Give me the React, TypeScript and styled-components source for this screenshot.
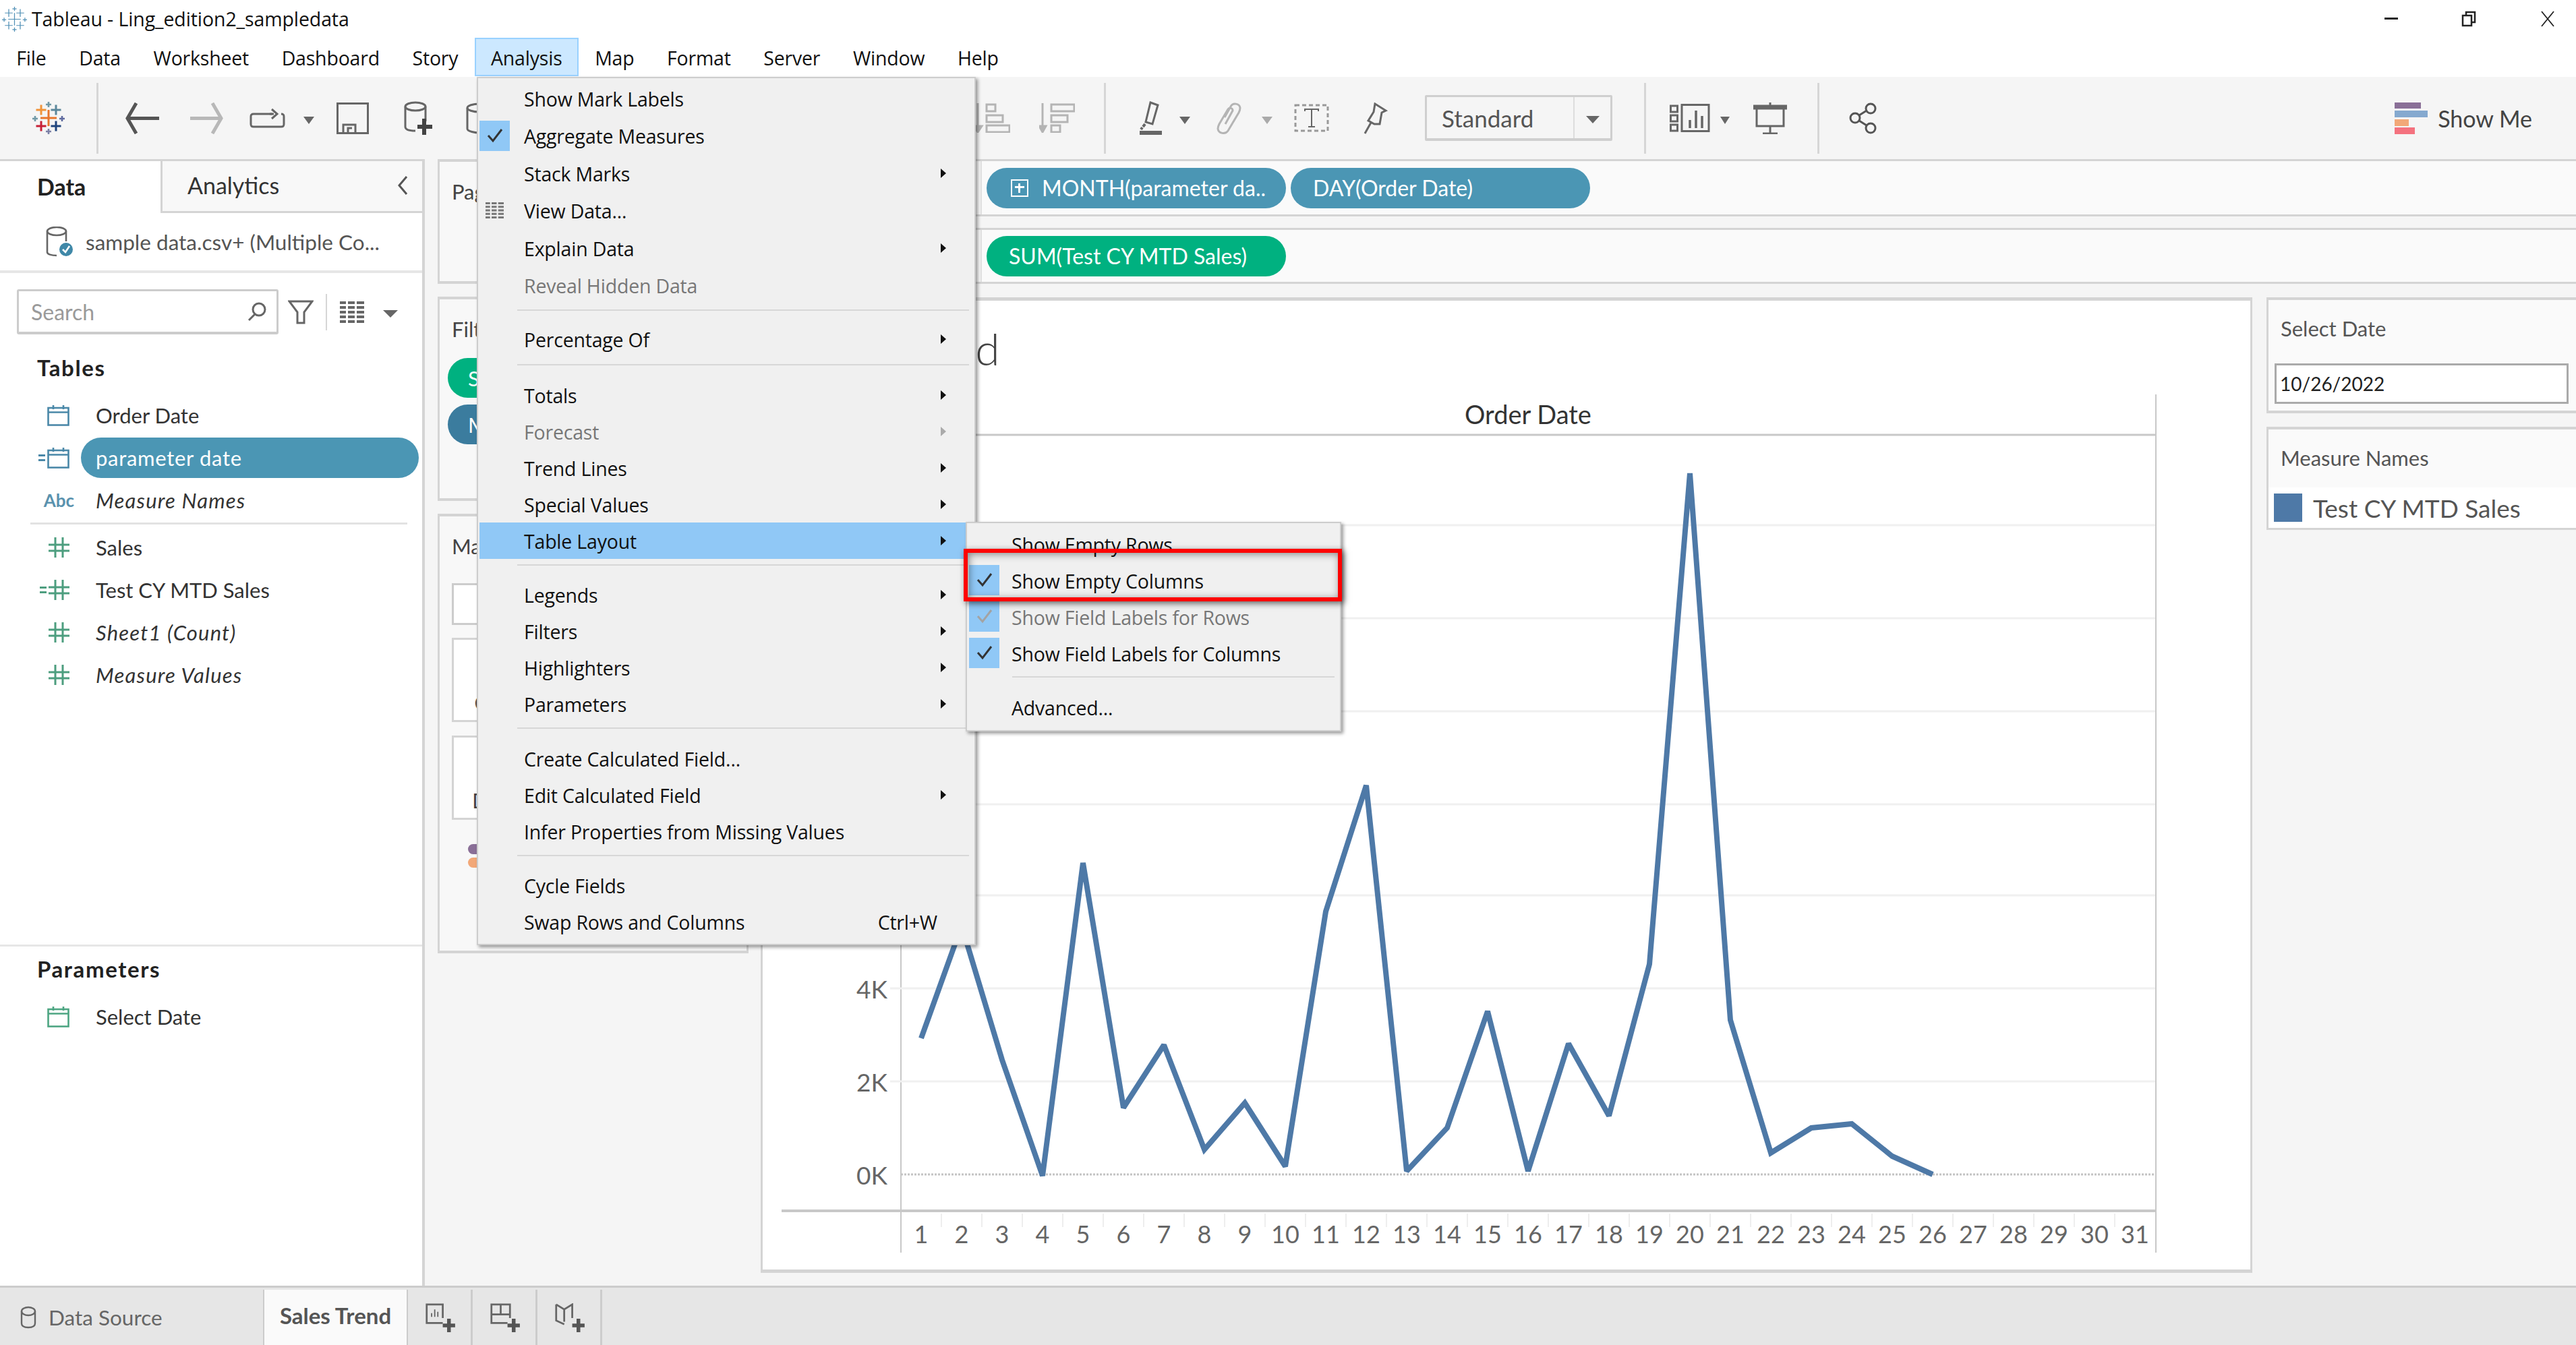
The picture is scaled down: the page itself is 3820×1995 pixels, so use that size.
import React from "react";
import styled, { createGlobalStyle } from "styled-components";

const BOOK = `"Lato", "Open Sans", sans-serif`;
const UI = `"Open Sans", "Noto Sans", sans-serif`;
const BORDER = "#d4d4d4";

const GlobalStyle = createGlobalStyle`
  html, body { margin: 0; padding: 0; background: #fff; }
  * { box-sizing: border-box; }
`;

const Page = styled.div`
  position: relative;
  width: 3820px;
  height: 1995px;
  overflow: hidden;
  display: flex;
  flex-direction: column;
  background: #f5f5f5;
  font-family: ${BOOK};
`;

const TitleBar = styled.div`
  height: 56px;
  background: #fff;
  display: flex;
  align-items: center;
  position: relative;
`;

const TitleText = styled.span`
  margin-left: 7px;
  font: 400 28.5px ${UI};
  letter-spacing: -0.1px;
  color: #111;
`;

const WindowButtons = styled.div`
  margin-left: auto;
  display: flex;
  align-items: center;
  height: 100%;
  padding-right: 30px;
  gap: 94px;
`;

const MenuBar = styled.div`
  height: 58px;
  background: #fff;
  display: flex;
`;

const MenuBarItem = styled.div<{ $open?: boolean }>`
  height: 57px;
  padding: 2px 22.3px 0;
  display: flex;
  align-items: center;
  font: 400 28.5px ${UI};
  letter-spacing: -0.2px;
  color: #111;
  background: ${(p) => (p.$open ? "#cce8ff" : "transparent")};
  border: 2px solid ${(p) => (p.$open ? "#99d1ff" : "transparent")};
`;

const Toolbar = styled.div`
  height: 122px;
  display: flex;
  align-items: center;
  padding: 0 65px 0 48px;
  background: #f5f5f5;
`;

const Tool = styled.div<{ $ml?: number }>`
  margin-left: ${(p) => p.$ml ?? 0}px;
  display: flex;
  align-items: center;
  flex: none;
`;

const ToolSep = styled.div<{ $ml: number }>`
  margin-left: ${(p) => p.$ml}px;
  width: 3px;
  height: 105px;
  background: #d6d6d6;
  flex: none;
`;

const Tri = styled.div<{ $ml: number; $light?: boolean; $w?: number }>`
  margin-left: ${(p) => p.$ml}px;
  flex: none;
  width: 0;
  height: 0;
  margin-top: 6px;
  border-left: ${(p) => (p.$w ?? 16) / 2}px solid transparent;
  border-right: ${(p) => (p.$w ?? 16) / 2}px solid transparent;
  border-top: 11px solid ${(p) => (p.$light ? "#aaa" : "#666")};
`;

const SelectBox = styled.div<{ $ml: number }>`
  margin-left: ${(p) => p.$ml}px;
  width: 278px;
  height: 68px;
  flex: none;
  border: 3px solid #cfcfcf;
  border-bottom-width: 4px;
  border-radius: 2px;
  display: flex;
  align-items: center;
  font: 400 35px ${BOOK};
  color: #555;
  padding-left: 22px;
`;

const SelectArrow = styled.div`
  margin-left: auto;
  width: 55px;
  height: 100%;
  border-left: 2px solid #ddd;
  display: flex;
  align-items: center;
  justify-content: center;
`;

const ShowMe = styled.div`
  margin-left: auto;
  display: flex;
  align-items: center;
  gap: 15px;
  font: 400 34px ${BOOK};
  color: #444;
`;

const Body = styled.div`
  flex: 1;
  display: flex;
  min-height: 0;
`;

/* left pane */

const DataPane = styled.div`
  width: 630px;
  background: #fff;
  border-top: 3px solid ${BORDER};
  border-right: 4px solid ${BORDER};
  display: flex;
  flex-direction: column;
  flex: none;
`;

const PaneTabs = styled.div`
  height: 77px;
  display: flex;
`;

const DataTab = styled.div`
  width: 238px;
  display: flex;
  align-items: center;
  padding: 0 0 3px 55px;
  font: 700 34px ${BOOK};
  color: #222;
`;

const AnalyticsTab = styled.div`
  flex: 1;
  display: flex;
  align-items: center;
  padding: 0 21px 3px 37px;
  justify-content: space-between;
  background: #f8f8f8;
  border-left: 3px solid ${BORDER};
  border-bottom: 3px solid ${BORDER};
  font: 400 34px ${BOOK};
  color: #333;
`;

const SourceRow = styled.div`
  height: 89px;
  display: flex;
  align-items: center;
  padding-left: 68px;
  gap: 19px;
  border-bottom: 4px solid #e6e6e6;
  font: 400 31.5px ${BOOK};
  color: #555;
`;

const SearchRow = styled.div`
  display: flex;
  align-items: center;
  padding: 24px 0 0 25px;
`;

const SearchBox = styled.div`
  width: 388px;
  height: 67px;
  border: 3px solid #ccc;
  border-bottom-width: 4px;
  border-radius: 3px;
  display: flex;
  align-items: center;
  justify-content: space-between;
  padding: 0 14px 0 18px;
  font: 400 32px ${BOOK};
  color: #9a9a9a;
`;

const SearchSep = styled.div`
  margin-left: 18px;
  width: 2px;
  height: 54px;
  background: #d6d6d6;
  flex: none;
`;

const Heading = styled.div<{ $mt: number }>`
  margin: ${(p) => p.$mt}px 0 0 55px;
  height: 40px;
  display: flex;
  align-items: center;
  font: 700 33px ${BOOK};
  letter-spacing: 1.6px;
  color: #222;
`;

const FieldList = styled.div`
  margin-top: 19px;
`;

const FieldRow = styled.div`
  height: 63px;
  display: flex;
  align-items: center;
`;

const FieldIcon = styled.div`
  width: 120px;
  flex: none;
  display: flex;
  justify-content: flex-end;
  align-items: center;
  padding-right: 17px;
`;

const AbcIcon = styled.span`
  font: 700 26px ${BOOK};
  color: #5a92ae;
  margin-right: -7px;
`;

const FieldName = styled.div<{ $italic?: boolean; $active?: boolean }>`
  height: 60px;
  flex: 1;
  margin-right: 5px;
  display: flex;
  align-items: center;
  padding-left: 22px;
  border-radius: 30px;
  font: ${(p) => (p.$italic ? "italic" : "normal")} 400 31px ${BOOK};
  letter-spacing: ${(p) => (p.$italic ? "1.2px" : p.$active ? "0.7px" : "0")};
  color: ${(p) => (p.$active ? "#fff" : "#333")};
  background: ${(p) => (p.$active ? "#4b96b4" : "transparent")};
`;

const FieldDivider = styled.div`
  height: 3px;
  background: #e2e2e2;
  margin: 2px 22px 2px 45px;
`;

const ParamSection = styled.div`
  margin-top: auto;
  height: 506px;
  border-top: 3px solid #e6e6e6;
`;

/* cards column */

const CardsPane = styled.div`
  width: 498px;
  flex: none;
  padding-left: 19px;
  display: flex;
  flex-direction: column;
  gap: 19px;
`;

const Card = styled.div<{ $h: number }>`
  width: 461px;
  height: ${(p) => p.$h}px;
  flex: none;
  background: #f8f8f8;
  border: 3px solid ${BORDER};
  border-width: 4px 3px;
  padding: 25px 20px 0 18px;
  font: 400 31px ${BOOK};
  color: #444;
`;

const FilterSpace = styled.div`
  height: 24px;
`;

const FilterPill = styled.div<{ $c: string }>`
  height: 59px;
  margin: 0 0 10px -6px;
  border-radius: 30px;
  background: ${(p) => p.$c};
  color: #fff;
  display: flex;
  align-items: center;
  padding-left: 30px;
`;

const MarkSelect = styled.div`
  height: 62px;
  margin-top: 36px;
  background: #fff;
  border: 3px solid #ccc;
`;

const MarkTiles = styled.div`
  display: grid;
  grid-template-columns: repeat(3, 1fr);
  grid-auto-rows: 125px;
  gap: 20px 0;
  margin-top: 19px;
`;

const MarkTile = styled.div`
  border: 3px solid ${BORDER};
  background: #fff;
  display: flex;
  align-items: flex-end;
  justify-content: center;
  padding-bottom: 8px;
  font-size: 30px;
`;

const MarkDot = styled.div<{ $c: string; $mt: number }>`
  width: 34px;
  height: 15px;
  border-radius: 8px;
  margin: ${(p) => p.$mt}px 0 0 24px;
  background: ${(p) => p.$c};
`;

/* main */

const Main = styled.div`
  flex: 1;
  min-width: 0;
  display: flex;
  flex-direction: column;
`;

const Shelf = styled.div<{ $h: number; $mb: number }>`
  height: ${(p) => p.$h}px;
  margin-bottom: ${(p) => p.$mb}px;
  flex: none;
  background: #fafafa;
  border-top: 3px solid ${BORDER};
  border-bottom: 3px solid ${BORDER};
  display: flex;
  align-items: center;
`;

const ShelfLabel = styled.div`
  width: 328px;
  height: 100%;
  flex: none;
  border-right: 2px solid #e2e2e2;
`;

const Pill = styled.div<{ $c: string }>`
  width: 444px;
  height: 60px;
  margin-left: 7px;
  flex: none;
  border-radius: 30px;
  background: ${(p) => p.$c};
  color: #fff;
  font: 400 32px ${BOOK};
  display: flex;
  align-items: center;
  gap: 20px;
  padding-left: 33px;
  white-space: nowrap;
`;

const PlusBox = styled.span`
  width: 26px;
  height: 26px;
  border: 2.5px solid #fff;
  position: relative;
  margin-left: 3px;
  flex: none;
  &::before, &::after {
    content: "";
    position: absolute;
    background: #fff;
  }
  &::before { left: 4px; right: 4px; top: 8.5px; height: 3px; }
  &::after { top: 4px; bottom: 4px; left: 8.5px; width: 3px; }
`;

const Content = styled.div`
  flex: 1;
  display: flex;
  gap: 21px;
  padding-bottom: 19px;
  min-height: 0;
`;

const ChartCard = styled.div`
  width: 2212px;
  flex: none;
  background: #fff;
  border: 3px solid ${BORDER};
  border-width: 5px 3px;
  display: flex;
  flex-direction: column;
`;

const ChartTitle = styled.div`
  height: 124px;
  padding: 31px 0 0 33px;
  font: 300 66px ${BOOK};
  color: #444;
`;

const Side = styled.div`
  flex: 1;
  display: flex;
  flex-direction: column;
  gap: 20px;
`;

const SideCard = styled.div<{ $h: number }>`
  height: ${(p) => p.$h}px;
  background: #fafafa;
  border-top: 4px solid ${BORDER};
  border-bottom: 4px solid ${BORDER};
  border-left: 3px solid ${BORDER};
`;

const SideTitle = styled.div`
  height: 84px;
  padding-left: 18px;
  display: flex;
  align-items: center;
  font: 400 31px ${BOOK};
  color: #555;
`;

const DateInput = styled.div`
  width: 436px;
  height: 60px;
  margin: 10px 0 0 9px;
  background: #fff;
  border: 3px solid #aaa;
  display: flex;
  align-items: center;
  padding-left: 5px;
  font: 400 28px ${BOOK};
  color: #222;
`;

const LegendRow = styled.div`
  height: 60px;
  margin-top: 2px;
  background: #fff;
  display: flex;
  align-items: center;
  padding-left: 8px;
  gap: 16px;
  font: 400 37px ${BOOK};
  color: #555;
`;

const Swatch = styled.div`
  width: 42px;
  height: 42px;
  background: #4e79a7;
`;

/* bottom tabs */

const BottomBar = styled.div`
  height: 88px;
  flex: none;
  background: #e6e6e6;
  border-top: 3px solid #ccc;
  display: flex;
  padding-top: 3px;
`;

const SourceTab = styled.div`
  width: 392px;
  display: flex;
  align-items: center;
  gap: 18px;
  padding-left: 30px;
  border-right: 2px solid #ccc;
  font: 400 31.5px ${BOOK};
  color: #666;
`;

const SheetTab = styled.div`
  width: 213px;
  background: #fafafa;
  border-right: 2px solid #ccc;
  display: flex;
  justify-content: center;
  padding-top: 18px;
  font: 700 33px ${BOOK};
  color: #555;
`;

const NewTab = styled.div`
  width: 96px;
  border-right: 3px solid #ccc;
  display: flex;
  align-items: center;
  justify-content: center;
  padding-top: 2px;
`;

/* menus */

const Menu = styled.div<{ $left: number; $top: number; $w: number }>`
  position: absolute;
  left: ${(p) => p.$left}px;
  top: ${(p) => p.$top}px;
  width: ${(p) => p.$w}px;
  background: #f0f0f0;
  border: 2px solid #cdcdcd;
  box-shadow: 3px 3px 5px rgba(0, 0, 0, 0.4);
  font: 400 28.5px ${UI};
  letter-spacing: -0.2px;
  color: #111;
`;

const MainMenu = styled(Menu)`
  padding: 2px 8px 7px 2px;
  height: 1288px;
`;

const SubMenu = styled(Menu)`
  padding: 3px 8px 5px 3px;
  height: 311px;
`;

const MenuRow = styled.div<{ $h?: number; $hot?: boolean; $off?: boolean }>`
  height: ${(p) => p.$h ?? 54}px;
  margin-right: 5px;
  display: flex;
  align-items: center;
  padding-right: 29px;
  background: ${(p) => (p.$hot ? "#90c8f6" : "transparent")};
  color: ${(p) => (p.$off ? "#777" : "#111")};
`;

const CheckSlot = styled.div<{ $on?: boolean; $gap: number }>`
  width: 45px;
  height: 45px;
  margin-right: ${(p) => p.$gap}px;
  flex: none;
  display: flex;
  align-items: center;
  justify-content: center;
  background: ${(p) => (p.$on ? "#90c8f6" : "transparent")};
`;

const MenuLabel = styled.span`
  flex: 1;
  white-space: nowrap;
  padding-top: 2px;
`;

const SubLabel = styled(MenuLabel)`
  padding-top: 4px;
`;

const Shortcut = styled.span`
  margin-right: 13px;
  padding-top: 2px;
`;

const SubArrow = styled.span<{ $off?: boolean }>`
  width: 0;
  height: 0;
  border-top: 7px solid transparent;
  border-bottom: 7px solid transparent;
  border-left: 8px solid ${(p) => (p.$off ? "#aaa" : "#111")};
`;

const MenuSep = styled.div<{ $ml: number; $top?: number; $bottom?: number }>`
  height: 2px;
  margin: ${(p) => p.$top ?? 8}px 0 ${(p) => p.$bottom ?? 16}px ${(p) => p.$ml}px;
  background: #d7d7d7;
`;

const Callout = styled.div`
  position: absolute;
  left: 1429px;
  top: 814px;
  width: 561px;
  height: 78px;
  border: 6px solid #ff0000;
  box-shadow: 3px 3px 9px rgba(0, 0, 0, 0.6), inset 2px 2px 12px rgba(0, 0, 0, 0.45);
`;

/* drawings */

const G = "#666";

const TableauLogo: React.FC<{ size: number; mono?: boolean }> = ({ size, mono }) => {
  const crosses: [number, number, number, string][] = [
    [24, 24, 12, "#e8762d"],
    [13, 12, 7.5, "#f0943b"],
    [35, 12, 7.5, "#5b879b"],
    [13, 36, 7.5, "#c72037"],
    [35, 36, 7.5, "#1f457e"],
    [24, 4, 4, "#7099a6"],
    [24, 44, 4, "#7b80a6"],
    [4, 25, 4, "#7099a6"],
    [44, 25, 4, "#5f6a9f"],
  ];
  return (
    <svg width={size} height={size} viewBox="0 0 48 48">
      {crosses.map(([x, y, r, c], i) => (
        <path
          key={i}
          d={`M${x - r} ${y}H${x + r}M${x} ${y - r}V${y + r}`}
          stroke={mono ? "#4f8fb5" : c}
          strokeWidth={mono ? 1.6 : r > 5 ? 3 : 2.6}
          fill="none"
        />
      ))}
    </svg>
  );
};

const Cylinder: React.FC<{ w: number; h: number; c?: string; sw?: number }> = ({ w, h, c = G, sw = 3 }) => (
  <svg width={w} height={h} viewBox={`0 0 ${w} ${h}`} fill="none" stroke={c} strokeWidth={sw}>
    <ellipse cx={w / 2} cy={8} rx={w / 2 - 2} ry={6} />
    <path d={`M2 8V${h - 8}C2 ${h - 4} ${w / 2 - 6} ${h - 2} ${w / 2} ${h - 2}C${w / 2 + 6} ${h - 2} ${w - 2} ${h - 4} ${w - 2} ${h - 8}V8`} />
  </svg>
);

const Calendar: React.FC<{ c: string }> = ({ c }) => (
  <svg width="33" height="32" viewBox="0 0 33 32" fill="none" stroke={c} strokeWidth="2.6">
    <rect x="1.5" y="5" width="30" height="25.5" />
    <path d="M1.5 11.5H31.5M9 1V7M24 1V7" />
  </svg>
);

const Hash: React.FC<{ c?: string }> = ({ c = "#4d9e7f" }) => (
  <svg width="31" height="30" viewBox="0 0 31 30" fill="none" stroke={c} strokeWidth="3">
    <path d="M0 11H31M0 20H31M10 0V30M21 0V30" />
  </svg>
);

const EqMark = styled.svg`
  margin-right: 3px;
`;

const Eq: React.FC<{ c: string }> = ({ c }) => (
  <EqMark width="10" height="12" viewBox="0 0 10 12" fill={c}>
    <rect y="1" width="10" height="3" />
    <rect y="8" width="10" height="3" />
  </EqMark>
);

const ListIcon: React.FC<{ w?: number; h?: number; c?: string }> = ({ w = 36, h = 32, c = "#666" }) => (
  <svg width={w} height={h} viewBox="0 0 36 32" fill={c}>
    {[0, 7, 14, 21, 28].map((y) => (
      <g key={y}>
        <rect x="0" y={y} width="9" height="4" />
        <rect x="12" y={y} width="10" height="4" />
        <rect x="25" y={y} width="11" height="4" />
      </g>
    ))}
  </svg>
);

const CheckMark: React.FC<{ off?: boolean }> = ({ off }) => (
  <svg width="24" height="22" viewBox="0 0 24 22" fill="none" stroke={off ? "#a3a3a3" : "#333"} strokeWidth="3">
    <path d="M2 11L9 19L22 2" />
  </svg>
);

const AddBadge = () => <path d="M40 25V47M30 36H50" stroke="#555" strokeWidth="6" />;

const NewWorksheet = () => (
  <svg width="46" height="44" viewBox="0 0 50 48" fill="none" stroke="#666" strokeWidth="3">
    <path d="M30 32H4V2H30V24" />
    <path d="M12 22V16M17 22V10M22 22V14" strokeWidth="2" />
    <AddBadge />
  </svg>
);

const NewDashboard = () => (
  <svg width="46" height="44" viewBox="0 0 50 48" fill="none" stroke="#666" strokeWidth="3">
    <path d="M30 32H4V2H34V24M19 2V18M4 18H34" />
    <AddBadge />
  </svg>
);

const NewStory = () => (
  <svg width="46" height="44" viewBox="0 0 50 48" fill="none" stroke="#666" strokeWidth="3">
    <path d="M4 2L17 10L30 2V24M4 2V28L17 34M17 10V30" />
    <AddBadge />
  </svg>
);

const days = [1540, 1373, 1572, 1744, 1280, 1643, 1550, 1705, 1636, 1730, 1352, 1165, 1737, 1673, 1500, 1737, 1548, 1655, 1430, 702, 1513, 1710, 1673, 1667, 1715, 1742];

const ChartSvg = styled.svg`
  display: block;
`;

const LineChart = () => {
  const xOf = (d: number) => 1366 + (d - 1) * 60;
  const points = days.map((y, i) => `${xOf(i + 1)},${y}`).join(" ");
  const grid = [779, 917, 1055, 1193, 1328, 1466, 1604];
  return (
    <ChartSvg width="2206" height="1308" viewBox="1131 570 2206 1308">
      <path d="M1159 645H3198" stroke="#c8c8c8" strokeWidth="3" />
      <path d="M1336 645V1858M3197 585V1858" stroke="#c8c8c8" strokeWidth="2" />
      {grid.map((y) => (
        <path key={y} d={`M1320 ${y}H3196`} stroke="#f0f0f0" strokeWidth="3" />
      ))}
      <path d="M1336 1742H3196" stroke="#c4c4c4" strokeWidth="3" strokeDasharray="3 2" />
      <path d="M1159 1796H3198" stroke="#c8c8c8" strokeWidth="4" />
      {Array.from({ length: 30 }, (_, i) => (
        <path key={i} d={`M${1396 + i * 60} 1800V1820`} stroke="#eee" strokeWidth="2" />
      ))}
      <text x="2266" y="629" textAnchor="middle" fontFamily={BOOK} fontSize="38" fill="#333">
        Order Date
      </text>
      {[
        ["4K", 1481],
        ["2K", 1619],
        ["0K", 1757],
      ].map(([t, y]) => (
        <text key={t} x="1316" y={y} textAnchor="end" fontFamily={BOOK} fontSize="37" fill="#666">
          {t}
        </text>
      ))}
      {Array.from({ length: 31 }, (_, i) => (
        <text key={i} x={xOf(i + 1)} y="1844" textAnchor="middle" fontFamily={BOOK} fontSize="36" fill="#666">
          {i + 1}
        </text>
      ))}
      <polyline points={points} fill="none" stroke="#4e79a7" strokeWidth="8" strokeLinejoin="miter" strokeMiterlimit="2" />
    </ChartSvg>
  );
};

type Entry = { label: string; arrow?: boolean; off?: boolean; hot?: boolean; check?: boolean; grid?: boolean; key?: string };

const MRow: React.FC<{ e: Entry; h?: number }> = ({ e, h }) => (
  <MenuRow $h={h} $hot={e.hot} $off={e.off}>
    <CheckSlot $on={e.check} $gap={21}>
      {e.check && <CheckMark />}
      {e.grid && <ListIcon w={31} h={24} c="#777" />}
    </CheckSlot>
    <MenuLabel>{e.label}</MenuLabel>
    {e.key && <Shortcut>{e.key}</Shortcut>}
    {e.arrow && <SubArrow $off={e.off} />}
  </MenuRow>
);

const App: React.FC = () => (
  <Page>
    <GlobalStyle />
    <TitleBar>
      <Tool $ml={3}>
        <TableauLogo size={37} mono />
      </Tool>
      <TitleText>Tableau - Ling_edition2_sampledata</TitleText>
      <WindowButtons>
        <svg width="20" height="4" viewBox="0 0 20 4">
          <rect width="20" height="3" fill="#222" />
        </svg>
        <svg width="22" height="24" viewBox="0 0 22 24" fill="none" stroke="#222" strokeWidth="2.5">
          <rect x="2" y="7" width="13" height="15" />
          <path d="M7 7V2H20V17H15" />
        </svg>
        <svg width="24" height="24" viewBox="0 0 24 24" fill="none" stroke="#222" strokeWidth="1.8">
          <path d="M3 1L21 23M21 1L3 23" />
        </svg>
      </WindowButtons>
    </TitleBar>
    <MenuBar>
      {["File", "Data", "Worksheet", "Dashboard", "Story", "Analysis", "Map", "Format", "Server", "Window", "Help"].map((m) => (
        <MenuBarItem key={m} $open={m === "Analysis"}>
          {m}
        </MenuBarItem>
      ))}
    </MenuBar>
    <Toolbar>
      <Tool>
        <TableauLogo size={48} />
      </Tool>
      <ToolSep $ml={47} />
      <Tool $ml={39}>
        <svg width="51" height="47" viewBox="0 0 51 47" fill="none" stroke="#555" strokeWidth="5">
          <path d="M51 23.5H4M17 1L4 23.5L17 46" />
        </svg>
      </Tool>
      <Tool $ml={46}>
        <svg width="50" height="47" viewBox="0 0 50 47" fill="none" stroke="#b8b8b8" strokeWidth="5">
          <path d="M0 23.5H46M33 1L46 23.5L33 46" />
        </svg>
      </Tool>
      <Tool $ml={38}>
        <svg width="53" height="30" viewBox="0 0 53 30" fill="none" stroke="#666" strokeWidth="3">
          <path d="M34 9H6C3 9 2 10 2 13V24C2 27 3 28 6 28H47C50 28 51 27 51 24V13C51 10 50 9 47 9" />
          <path d="M30 9H36M33 2L41 9L33 16" />
        </svg>
      </Tool>
      <Tri $ml={27} />
      <Tool $ml={33}>
        <svg width="48" height="47" viewBox="0 0 48 47" fill="none" stroke="#666" strokeWidth="3">
          <rect x="1.5" y="1.5" width="45" height="44" />
          <path d="M10 45V33H28V45M17 45V38H23" />
        </svg>
      </Tool>
      <Tool $ml={52}>
        <svg width="42" height="50" viewBox="0 0 42 50" fill="none" stroke="#666" strokeWidth="3">
          <ellipse cx="17" cy="8" rx="15" ry="6" />
          <path d="M2 8V38C2 42 8 44 17 44M32 8V30" />
          <path d="M30 26V50M20 38H42" stroke="#444" strokeWidth="6" />
        </svg>
      </Tool>
      <Tool $ml={50}>
        <Cylinder w={40} h={47} />
      </Tool>
      <Tool $ml={710}>
        <svg width="57" height="44" viewBox="0 0 57 44" fill="none" stroke="#b4b4b4" strokeWidth="3">
          <path d="M9 0V34" />
          <path d="M3 34H15L9 43Z" fill="#b4b4b4" />
          <rect x="22" y="2" width="13" height="10" />
          <rect x="22" y="18" width="24" height="10" />
          <rect x="22" y="33" width="34" height="10" />
        </svg>
      </Tool>
      <Tool $ml={43}>
        <svg width="53" height="44" viewBox="0 0 53 44" fill="none" stroke="#b4b4b4" strokeWidth="3">
          <path d="M5 0V34" />
          <path d="M0 34H10L5 43Z" fill="#b4b4b4" />
          <rect x="18" y="2" width="34" height="10" />
          <rect x="18" y="18" width="24" height="10" />
          <rect x="18" y="33" width="13" height="10" />
        </svg>
      </Tool>
      <ToolSep $ml={43} />
      <Tool $ml={50}>
        <svg width="33" height="50" viewBox="0 0 33 50" fill="none" stroke="#666" strokeWidth="3">
          <path d="M16 2L27 6L19 34L9 31Z" />
          <path d="M8 34L5 38M4 39L2 42" strokeWidth="4" />
          <rect x="0" y="44" width="33" height="6" fill="#666" stroke="none" />
        </svg>
      </Tool>
      <Tri $ml={26} />
      <Tool $ml={39}>
        <svg width="37" height="50" viewBox="0 0 37 50" fill="none" stroke="#b4b4b4" strokeWidth="3">
          <path d="M12 24L21 8C24 2 34 3 35 10C35 13 34 15 33 17L17 44C13 50 3 48 2 41C2 38 3 36 4 34L17 12C19 9 24 10 24 14L13 34" />
        </svg>
      </Tool>
      <Tri $ml={30} $light />
      <Tool $ml={32}>
        <svg width="52" height="42" viewBox="0 0 52 42" fill="none" stroke="#999" strokeWidth="3">
          <rect x="2" y="2" width="48" height="38" strokeDasharray="6 4" />
          <path d="M16 11V8H36V11M26 8V34M21 34H31" stroke="#666" strokeWidth="2" />
        </svg>
      </Tool>
      <Tool $ml={50}>
        <svg width="38" height="47" viewBox="0 0 38 47" fill="none" stroke="#666" strokeWidth="3">
          <path d="M18 2L34 12L28 15L25 32L17 32L8 27L16 14Z" />
          <path d="M12 30L3 46" />
        </svg>
      </Tool>
      <SelectBox $ml={54}>
        Standard
        <SelectArrow>
          <Tri $ml={0} $w={20} />
        </SelectArrow>
      </SelectBox>
      <ToolSep $ml={47} />
      <Tool $ml={35}>
        <svg width="60" height="42" viewBox="0 0 60 42" fill="none" stroke="#666" strokeWidth="3">
          <rect x="18" y="1.5" width="40" height="39" />
          <path d="M30 36V24M39 36V10M48 36V18" strokeWidth="3.5" />
          <rect x="1.5" y="3" width="10" height="9" />
          <rect x="1.5" y="17" width="10" height="9" />
          <rect x="1.5" y="31" width="10" height="9" />
        </svg>
      </Tool>
      <Tri $ml={15} $w={14} />
      <Tool $ml={35}>
        <svg width="50" height="47" viewBox="0 0 50 47" fill="none" stroke="#666" strokeWidth="3">
          <path d="M0 7H50" strokeWidth="7" />
          <path d="M5 7V35H45V7M25 0V4M25 35V46M14 46H36" />
        </svg>
      </Tool>
      <ToolSep $ml={45} />
      <Tool $ml={44}>
        <svg width="42" height="47" viewBox="0 0 42 47" fill="none" stroke="#555" strokeWidth="3">
          <circle cx="9" cy="23" r="7" />
          <circle cx="32" cy="9" r="7" />
          <circle cx="32" cy="38" r="7" />
          <path d="M15 19L26 12M15 27L26 34" />
        </svg>
      </Tool>
      <ShowMe>
        <svg width="49" height="47" viewBox="0 0 49 47">
          <rect width="39" height="9" fill="#8a6f97" />
          <rect y="12" width="49" height="10" fill="#85a9cf" />
          <rect y="25" width="21" height="10" fill="#f2a878" />
          <rect y="37" width="30" height="10" fill="#f4727f" />
        </svg>
        Show Me
      </ShowMe>
    </Toolbar>
    <Body>
      <DataPane>
        <PaneTabs>
          <DataTab>Data</DataTab>
          <AnalyticsTab>
            Analytics
            <svg width="16" height="30" viewBox="0 0 16 30" fill="none" stroke="#555" strokeWidth="3">
              <path d="M14 2L3 15L14 28" />
            </svg>
          </AnalyticsTab>
        </PaneTabs>
        <SourceRow>
          <svg width="40" height="46" viewBox="0 0 40 46" fill="none" stroke="#666" strokeWidth="2.6">
            <ellipse cx="16" cy="7" rx="14" ry="6" />
            <path d="M2 7V38C2 41 8 43 16 43M30 7V22" />
            <circle cx="30" cy="34" r="10" fill="#3f88a8" stroke="none" />
            <path d="M25 34L29 38L35 29" stroke="#fff" />
          </svg>
          sample data.csv+ (Multiple Co...
        </SourceRow>
        <SearchRow>
          <SearchBox>
            Search
            <svg width="30" height="30" viewBox="0 0 30 30" fill="none" stroke="#666" strokeWidth="3">
              <circle cx="18" cy="12" r="9" />
              <path d="M12 19L3 28" />
            </svg>
          </SearchBox>
          <Tool $ml={14}>
            <svg width="38" height="36" viewBox="0 0 38 36" fill="none" stroke="#666" strokeWidth="3">
              <path d="M2 2H36L24 18V34H14V18Z" />
            </svg>
          </Tool>
          <SearchSep />
          <Tool $ml={19}>
            <ListIcon />
          </Tool>
          <Tri $ml={28} $w={22} />
        </SearchRow>
        <Heading $mt={29}>Tables</Heading>
        <FieldList>
          <FieldRow>
            <FieldIcon>
              <Calendar c="#4a88a8" />
            </FieldIcon>
            <FieldName>Order Date</FieldName>
          </FieldRow>
          <FieldRow>
            <FieldIcon>
              <Eq c="#4a88a8" />
              <Calendar c="#4a88a8" />
            </FieldIcon>
            <FieldName $active>parameter date</FieldName>
          </FieldRow>
          <FieldRow>
            <FieldIcon>
              <AbcIcon>Abc</AbcIcon>
            </FieldIcon>
            <FieldName $italic>Measure Names</FieldName>
          </FieldRow>
          <FieldDivider />
          <FieldRow>
            <FieldIcon>
              <Hash />
            </FieldIcon>
            <FieldName>Sales</FieldName>
          </FieldRow>
          <FieldRow>
            <FieldIcon>
              <Eq c="#4d9e7f" />
              <Hash />
            </FieldIcon>
            <FieldName>Test CY MTD Sales</FieldName>
          </FieldRow>
          <FieldRow>
            <FieldIcon>
              <Hash />
            </FieldIcon>
            <FieldName $italic>Sheet1 (Count)</FieldName>
          </FieldRow>
          <FieldRow>
            <FieldIcon>
              <Hash />
            </FieldIcon>
            <FieldName $italic>Measure Values</FieldName>
          </FieldRow>
        </FieldList>
        <ParamSection>
          <Heading $mt={13}>Parameters</Heading>
          <FieldList>
            <FieldRow>
              <FieldIcon>
                <Calendar c="#4da582" />
              </FieldIcon>
              <FieldName>Select Date</FieldName>
            </FieldRow>
          </FieldList>
        </ParamSection>
      </DataPane>
      <CardsPane>
        <Card $h={185}>Pages</Card>
        <Card $h={303}>
          Filters
          <FilterSpace />
          <FilterPill $c="#00b180">SUM(Test CY MTD Sales)</FilterPill>
          <FilterPill $c="#3b7c9e">MONTH(parameter date)</FilterPill>
        </Card>
        <Card $h={652}>
          Marks
          <MarkSelect />
          <MarkTiles>
            <MarkTile>Color</MarkTile>
            <MarkTile />
            <MarkTile />
            <MarkTile>Detail</MarkTile>
            <MarkTile />
            <MarkTile />
          </MarkTiles>
          <MarkDot $c="#8a6f97" $mt={36} />
          <MarkDot $c="#f2a878" $mt={5} />
        </Card>
      </CardsPane>
      <Main>
        <Shelf $h={85} $mb={17}>
          <ShelfLabel />
          <Pill $c="#4b96b4">
            <PlusBox />
            MONTH(parameter da..
          </Pill>
          <Pill $c="#4b96b4">DAY(Order Date)</Pill>
        </Shelf>
        <Shelf $h={83} $mb={20}>
          <ShelfLabel />
          <Pill $c="#00b180">SUM(Test CY MTD Sales)</Pill>
        </Shelf>
        <Content>
          <ChartCard>
            <ChartTitle>Sales Trend</ChartTitle>
            <LineChart />
          </ChartCard>
          <Side>
            <SideCard $h={172}>
              <SideTitle>Select Date</SideTitle>
              <DateInput>10/26/2022</DateInput>
            </SideCard>
            <SideCard $h={153}>
              <SideTitle>Measure Names</SideTitle>
              <LegendRow>
                <Swatch />
                Test CY MTD Sales
              </LegendRow>
            </SideCard>
          </Side>
        </Content>
      </Main>
    </Body>
    <BottomBar>
      <SourceTab>
        <Cylinder w={24} h={34} sw={2.4} />
        Data Source
      </SourceTab>
      <SheetTab>Sales Trend</SheetTab>
      <NewTab>
        <NewWorksheet />
      </NewTab>
      <NewTab>
        <NewDashboard />
      </NewTab>
      <NewTab>
        <NewStory />
      </NewTab>
    </BottomBar>

    <MainMenu $left={707} $top={114} $w={740}>
      <MRow h={55.5} e={{ label: "Show Mark Labels" }} />
      <MRow h={55.5} e={{ label: "Aggregate Measures", check: true }} />
      <MRow h={55.5} e={{ label: "Stack Marks", arrow: true }} />
      <MRow h={55.5} e={{ label: "View Data...", grid: true }} />
      <MRow h={55.5} e={{ label: "Explain Data", arrow: true }} />
      <MRow h={55.5} e={{ label: "Reveal Hidden Data", off: true }} />
      <MenuSep $ml={56} $bottom={15} />
      <MRow e={{ label: "Percentage Of", arrow: true }} />
      <MenuSep $ml={56} $top={10} $bottom={17} />
      <MRow e={{ label: "Totals", arrow: true }} />
      <MRow e={{ label: "Forecast", arrow: true, off: true }} />
      <MRow e={{ label: "Trend Lines", arrow: true }} />
      <MRow e={{ label: "Special Values", arrow: true }} />
      <MRow e={{ label: "Table Layout", arrow: true, hot: true }} />
      <MenuSep $ml={56} />
      <MRow e={{ label: "Legends", arrow: true }} />
      <MRow e={{ label: "Filters", arrow: true }} />
      <MRow e={{ label: "Highlighters", arrow: true }} />
      <MRow e={{ label: "Parameters", arrow: true }} />
      <MenuSep $ml={56} $bottom={17} />
      <MRow e={{ label: "Create Calculated Field..." }} />
      <MRow e={{ label: "Edit Calculated Field", arrow: true }} />
      <MRow e={{ label: "Infer Properties from Missing Values" }} />
      <MenuSep $ml={56} />
      <MRow e={{ label: "Cycle Fields" }} />
      <MRow e={{ label: "Swap Rows and Columns", key: "Ctrl+W" }} />
    </MainMenu>

    <SubMenu $left={1432} $top={774} $w={557}>
      {[
        { label: "Show Empty Rows" },
        { label: "Show Empty Columns", check: true },
        { label: "Show Field Labels for Rows", check: true, off: true },
        { label: "Show Field Labels for Columns", check: true },
      ].map((e) => (
        <MenuRow key={e.label} $off={e.off}>
          <CheckSlot $on={e.check} $gap={18}>
            {e.check && <CheckMark off={e.off} />}
          </CheckSlot>
          <SubLabel>{e.label}</SubLabel>
        </MenuRow>
      ))}
      <MenuSep $ml={64} $bottom={16} />
      <MenuRow>
        <CheckSlot $gap={18} />
        <SubLabel>Advanced...</SubLabel>
      </MenuRow>
    </SubMenu>
    <Callout />
  </Page>
);

export default App;
